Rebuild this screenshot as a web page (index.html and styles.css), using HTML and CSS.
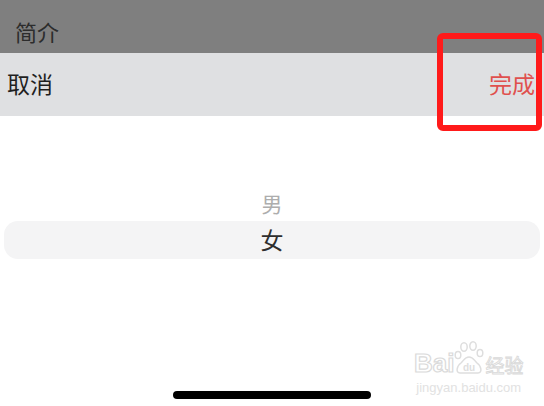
FILE: index.html
```html
<!DOCTYPE html>
<html lang="zh-CN">
<head>
    <meta charset="UTF-8">
    <meta name="viewport" content="width=device-width, initial-scale=1.0">
    <title>简介 - 性别</title>
    <link rel="stylesheet" href="styles.css">
</head>
<body>
    <div class="screen">
        <div class="topbar"><span class="topbar-title">简介</span></div>
        <div class="toolbar">
            <span class="cancel">取消</span>
            <span class="done">完成</span>
        </div>
        <div class="highlight"></div>

        <div class="picker">
            <div class="picker-item faded">男</div>
            <div class="picker-item selected">女</div>
        </div>

        <div class="home-bar"></div>

        <div class="watermark">
            <div class="wm-logo">
                <span class="wm-bai">Bai</span>
                <span class="wm-paw">
                    <svg width="30" height="36" viewBox="0 0 30 36">
                        <g fill="none" stroke="#dedede" stroke-width="1.5">
                            <ellipse cx="10" cy="6" rx="3.2" ry="4.2"/>
                            <ellipse cx="19" cy="5" rx="3.2" ry="4.2"/>
                            <ellipse cx="26" cy="12" rx="2.8" ry="3.6"/>
                            <ellipse cx="4" cy="14" rx="2.8" ry="3.6"/>
                            <path d="M6 32 C1.5 32 2.5 25 7 22 C10 19 11 16 15 16 C19 16 20 19 23 22 C27.5 25 28.5 32 24 32 Z"/>
                        </g>
                        <text x="15" y="30" text-anchor="middle" font-size="10" font-weight="bold" font-family="Liberation Sans, sans-serif" fill="#dedede">du</text>
                    </svg>
                </span>
                <span class="wm-jy">经验</span>
            </div>
            <div class="wm-url">jingyan.baidu.com</div>
        </div>
    </div>
</body>
</html>
```

FILE: styles.css
```css
body {
    margin: 0;
    padding: 0;
    background-color: #ffffff;
    font-family: "Noto Sans CJK SC", "Noto Sans", sans-serif;
}
.screen {
    position: relative;
    width: 544px;
    height: 406px;
    overflow: hidden;
    display: flex;
    flex-direction: column;
}
.topbar {
    height: 53px;
    background-color: #7f7f7f;
    display: flex;
    align-items: flex-end;
    padding-left: 15px;
    box-sizing: border-box;
}
.topbar-title {
    font-size: 22px;
    line-height: 1;
    color: #2c2c2c;
    padding-bottom: 11px;
}
.toolbar {
    height: 63px;
    background-color: #dfe0e2;
    display: flex;
    align-items: center;
    justify-content: space-between;
    padding: 0 9px 4px 7px;
    box-sizing: border-box;
}
.cancel {
    font-size: 23px;
    color: #1f1f1f;
}
.done {
    font-size: 23px;
    color: #e0504e;
}
.highlight {
    position: absolute;
    left: 437px;
    top: 33px;
    width: 105px;
    height: 98px;
    box-sizing: border-box;
    border: 6px solid #ff1a1a;
    border-radius: 6px;
}
.picker {
    margin-top: 77px;
    display: flex;
    flex-direction: column;
}
.picker-item {
    text-align: center;
    font-size: 21px;
    line-height: 1;
}
.faded {
    color: #adadad;
    height: 28px;
}
.selected {
    margin: 0 4px;
    height: 38px;
    line-height: 36px;
    border-radius: 14px;
    background-color: #f4f4f5;
    color: #2e2e2e;
    font-size: 23px;
}
.home-bar {
    margin: 132px auto 0;
    width: 198px;
    height: 8px;
    border-radius: 4px;
    background-color: #000000;
}
.watermark {
    position: absolute;
    left: 414px;
    top: 341px;
    color: #e2e2e2;
    text-align: center;
}
.wm-logo {
    display: flex;
    align-items: flex-end;
    height: 36px;
}
.wm-bai {
    font-family: "Liberation Sans", sans-serif;
    font-size: 26px;
    font-weight: bold;
    line-height: 1;
    color: transparent;
    -webkit-text-stroke: 1.2px #dadada;
    padding-bottom: 1px;
}
.wm-paw {
    display: inline-flex;
}
.wm-jy {
    font-size: 19px;
    line-height: 1;
    color: transparent;
    -webkit-text-stroke: 0.9px #dadada;
    padding-bottom: 3px;
    margin-left: 1px;
}
.wm-url {
    font-family: "Liberation Sans", sans-serif;
    font-size: 13px;
    color: #e2e2e2;
    margin-top: 3px;
}
```
